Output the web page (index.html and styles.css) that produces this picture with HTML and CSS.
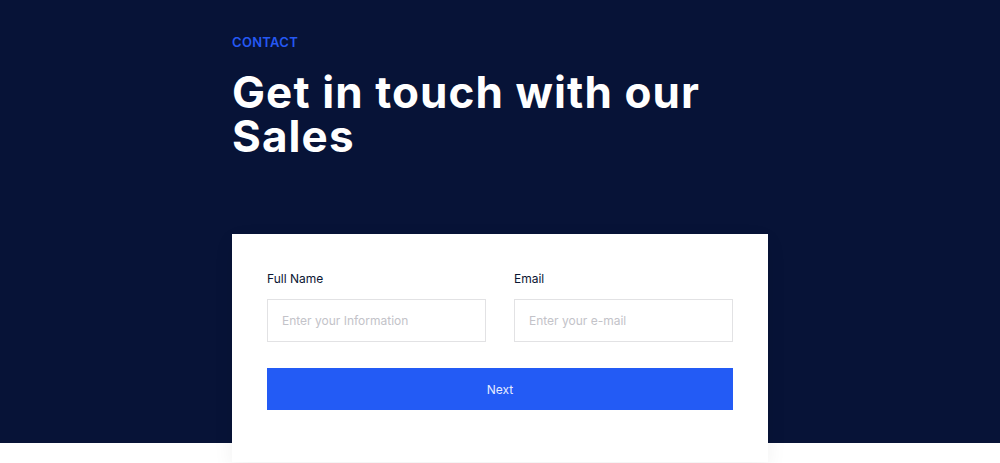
FILE: index.html
```html
<!DOCTYPE html>
<html lang="en">
<head>
  <meta charset="UTF-8" />
  <meta name="viewport" content="width=device-width, initial-scale=1" />
  <title>Contact Sales</title>
  <link rel="stylesheet" href="styles.css">
</head>
<body>
  <!-- Hero -->
  <section class="hero">
    <div class="container">
      <p class="eyebrow">CONTACT</p>
      <h1>Get in touch with our<br>Sales</h1>

      <form class="contact-card">
        <div class="fields">
          <div class="field">
            <label for="full-name">Full Name</label>
            <input type="text" id="full-name" placeholder="Enter your Information" />
          </div>
          <div class="field">
            <label for="email">Email</label>
            <input type="email" id="email" placeholder="Enter your e-mail" />
          </div>
        </div>
        <button type="submit">Next</button>
      </form>
    </div>
  </section>

  <section class="below"></section>
</body>
</html>
```

FILE: styles.css
```css
* {
  box-sizing: border-box;
  margin: 0;
  padding: 0;
  font-family: 'Inter', 'Open Sans', sans-serif;
}

body {
  background: #fff;
}

.hero {
  display: flow-root;
  background: #071337;
  padding-top: 34px;
}

.container {
  width: 536px;
  margin-left: 232px;
}

.eyebrow {
  color: #2558f2;
  font-size: 13px;
  font-weight: 600;
  line-height: 17px;
  letter-spacing: 0.3px;
}

h1 {
  color: #fff;
  font-size: 44px;
  font-weight: 700;
  line-height: 44px;
  margin-top: 19px;
  letter-spacing: 1.1px;
}

.contact-card {
  background: #fff;
  margin-top: 76px;
  margin-bottom: -19px;
  padding: 37px 35px 52px;
  box-shadow: 0 6px 20px rgba(0, 0, 0, 0.06);
  position: relative;
}

.fields {
  display: flex;
  gap: 28px;
  margin-bottom: 26px;
}

.field {
  flex: 1;
  min-width: 0;
  display: flex;
  flex-direction: column;
}

label {
  color: #0b1633;
  font-size: 12px;
  line-height: 16px;
  margin-bottom: 12px;
}

input {
  width: 100%;
  height: 43px;
  padding: 0 14px;
  border: 1px solid #e2e2e4;
  font-size: 12px;
  color: #222;
  outline: none;
}

input::placeholder {
  color: #c3c3c9;
}

button {
  display: block;
  width: 100%;
  height: 42px;
  background: #235bf5;
  color: #e6ecff;
  border: none;
  font-size: 12px;
  cursor: pointer;
}

.below {
  height: 40px;
}
```
